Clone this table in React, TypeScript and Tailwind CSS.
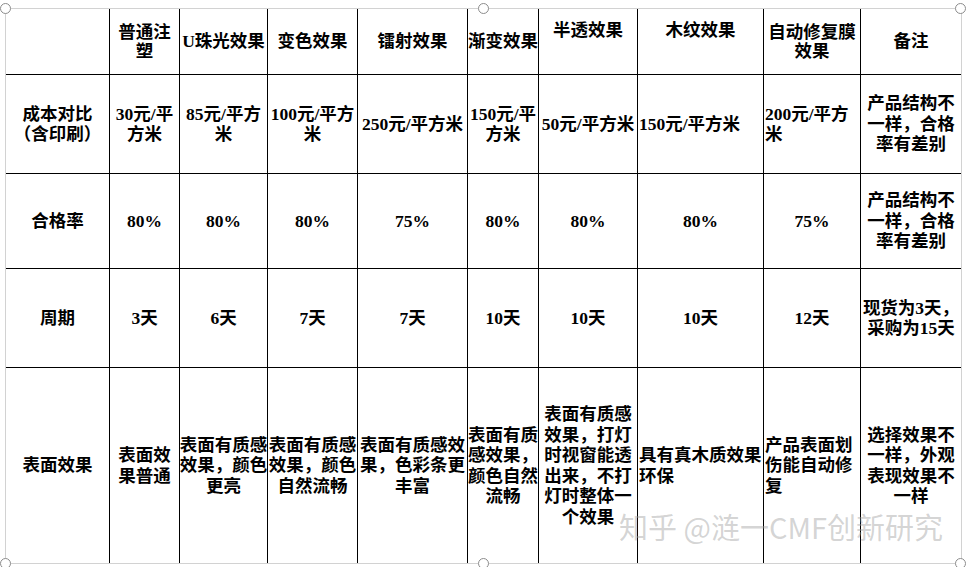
import React from "react";

type Cell = {
  lines: string[];
  left?: boolean;
  top?: boolean;
};

const c = (s: string, opts: Partial<Cell> = {}): Cell => ({
  lines: s === "" ? [] : s.split("|"),
  ...opts,
});

const rows: Cell[][] = [
  [
    c(""),
    c("普通注|塑"),
    c("U珠光效果"),
    c("变色效果"),
    c("镭射效果"),
    c("渐变效果"),
    c("半透效果", { top: true }),
    c("木纹效果", { top: true }),
    c("自动修复膜|效果"),
    c("备注"),
  ],
  [
    c("成本对比|（含印刷）"),
    c("30元/平|方米"),
    c("85元/平方|米"),
    c("100元/平方|米"),
    c("250元/平方米"),
    c("150元/平|方米"),
    c("50元/平方米"),
    c("150元/平方米", { left: true }),
    c("200元/平方|米", { left: true }),
    c("产品结构不|一样，合格|率有差别"),
  ],
  [
    c("合格率"),
    c("80%"),
    c("80%"),
    c("80%"),
    c("75%"),
    c("80%"),
    c("80%"),
    c("80%"),
    c("75%"),
    c("产品结构不|一样，合格|率有差别"),
  ],
  [
    c("周期"),
    c("3天"),
    c("6天"),
    c("7天"),
    c("7天"),
    c("10天"),
    c("10天"),
    c("10天"),
    c("12天"),
    c("现货为3天，|采购为15天"),
  ],
  [
    c("表面效果"),
    c("表面效|果普通"),
    c("表面有质感|效果，颜色|更亮"),
    c("表面有质感|效果，颜色|自然流畅"),
    c("表面有质感效|果，色彩条更|丰富"),
    c("表面有质|感效果，|颜色自然|流畅"),
    c("表面有质感|效果，打灯|时视窗能透|出来，不打|灯时整体一|个效果"),
    c("具有真木质效果|环保", { left: true }),
    c("产品表面划|伤能自动修|复", { left: true }),
    c("选择效果不|一样，外观|表现效果不|一样"),
  ],
];

function Handle({ cls }: { cls: string }) {
  return (
    <div
      className={`absolute w-[11px] h-[11px] rounded-full border border-[#8c8c8c] bg-white ${cls}`}
    />
  );
}

export default function App() {
  return (
    <div className="relative w-[966px] h-[567px] bg-white overflow-hidden pt-[8px] pl-[5px] text-black">
      <div className="w-[957px] h-[556px] border border-[#d2d2d2]">
        <div className="grid grid-cols-[104px_70px_88px_90px_110px_71px_99px_126px_97px_100px] grid-rows-[66px_99px_95px_99px_195px] font-bold text-[17.5px] font-['Liberation_Serif','Noto_Sans_CJK_SC',serif]">
          {rows.map((row, ri) =>
            row.map((cell, ci) => {
              const lastCol = ci === row.length - 1;
              const lastRow = ri === rows.length - 1;
              const border = `${lastCol ? "" : "border-r"} ${lastRow ? "" : "border-b"} border-black`;
              const lead = ri === 0 ? "leading-[19px]" : "leading-[20.5px]";
              const vert = cell.top ? "items-start pt-[12px]" : "items-center";
              const horiz = cell.left
                ? "justify-start text-left pl-[1px]"
                : "justify-center text-center";
              return (
                <div
                  key={`${ri}-${ci}`}
                  className={`flex ${vert} ${horiz} ${border} ${lead} overflow-hidden`}
                >
                  <div>
                    {cell.lines.map((l, li) => (
                      <div key={li} className="whitespace-nowrap">
                        {l}
                      </div>
                    ))}
                  </div>
                </div>
              );
            })
          )}
        </div>
      </div>

      <div className="absolute left-[619px] top-[512px] text-[29px] leading-none whitespace-nowrap text-[#a0a0a0]/45 font-['Noto_Sans_CJK_SC',sans-serif] font-normal">
        知乎 @涟一CMF创新研究
      </div>

      <Handle cls="left-[0px] top-[3px]" />
      <Handle cls="left-[478px] top-[3px]" />
      <Handle cls="left-[955px] top-[3px]" />
      <Handle cls="left-[0px] top-[558px]" />
      <Handle cls="left-[478px] top-[558px]" />
      <Handle cls="left-[955px] top-[558px]" />
    </div>
  );
}
